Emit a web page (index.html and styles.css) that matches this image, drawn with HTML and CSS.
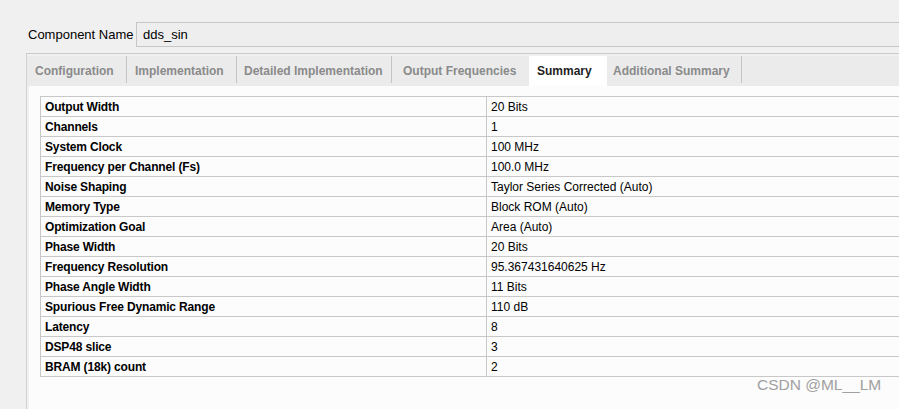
FILE: index.html
```html
<!DOCTYPE html>
<html lang="en">
<head>
<meta charset="UTF-8" />
<title>dds_sin</title>
<link rel="stylesheet" href="styles.css">
</head>
<body>
  <div class="name-row">
    <span class="name-label">Component Name</span>
    <input type="text" class="name-input" value="dds_sin" />
  </div>

  <div class="panel">
    <div class="tabs">
      <div class="tab t1">Configuration</div>
      <div class="tab t2">Implementation</div>
      <div class="tab t3">Detailed Implementation</div>
      <div class="tab t4">Output Frequencies</div>
      <div class="tab t5 active">Summary</div>
      <div class="tab t6">Additional Summary</div>
    </div>
    <div class="content">
      <table class="summary">
        <tr><td class="key">Output Width</td><td>20 Bits</td></tr>
        <tr><td class="key">Channels</td><td>1</td></tr>
        <tr><td class="key">System Clock</td><td>100 MHz</td></tr>
        <tr><td class="key">Frequency per Channel (Fs)</td><td>100.0 MHz</td></tr>
        <tr><td class="key">Noise Shaping</td><td>Taylor Series Corrected (Auto)</td></tr>
        <tr><td class="key">Memory Type</td><td>Block ROM (Auto)</td></tr>
        <tr><td class="key">Optimization Goal</td><td>Area (Auto)</td></tr>
        <tr><td class="key">Phase Width</td><td>20 Bits</td></tr>
        <tr><td class="key">Frequency Resolution</td><td>95.367431640625 Hz</td></tr>
        <tr><td class="key">Phase Angle Width</td><td>11 Bits</td></tr>
        <tr><td class="key">Spurious Free Dynamic Range</td><td>110 dB</td></tr>
        <tr><td class="key">Latency</td><td>8</td></tr>
        <tr><td class="key">DSP48 slice</td><td>3</td></tr>
        <tr><td class="key">BRAM (18k) count</td><td>2</td></tr>
      </table>
      <div class="watermark">CSDN @ML__LM</div>
    </div>
  </div>
</body>
</html>
```

FILE: styles.css
```css
html, body {
  height: 409px;
}
body {
  margin: 0;
  background-color: #f0f0f0;
  font-family: "Liberation Sans", Arial, sans-serif;
  font-size: 12px;
  color: #000;
  overflow: hidden;
}
.name-row {
  display: flex;
  align-items: center;
  padding-top: 22px;
  padding-left: 28px;
  height: 25px;
}
.name-label {
  font-size: 13px;
  width: 108px;
}
.name-input {
  flex: 1;
  min-width: 0;
  height: 25px;
  box-sizing: border-box;
  margin: 0;
  padding: 0 6px;
  border: 1px solid #c6c6c6;
  border-right: none;
  background-color: #eeeeee;
  font-family: "Liberation Sans", Arial, sans-serif;
  font-size: 13px;
  color: #000;
}
.panel {
  margin-top: 6px;
  margin-left: 26px;
  border-top: 1px solid #cacaca;
  border-left: 1px solid #d2d2d2;
  height: 355px;
  overflow: hidden;
}
.tabs {
  display: flex;
  margin-top: 2px;
  height: 30px;
  background-color: #ebebeb;
}
.tab {
  box-sizing: border-box;
  padding: 0 8px;
  line-height: 30px;
  font-weight: bold;
  color: #8a8a8a;
  position: relative;
  white-space: nowrap;
}
.tab::after {
  content: "";
  position: absolute;
  right: 0;
  top: 0;
  bottom: 3px;
  border-right: 1px solid #c4c4c4;
}
.tab.t1 { width: 100px; }
.tab.t2 { width: 110px; }
.tab.t3 { width: 155px; padding-left: 7px; }
.tab.t4 { width: 137px; padding-left: 11px; }
.tab.t5 { width: 78px; }
.tab.t6 { width: 135px; padding-left: 6px; }
.tab.t4::after,
.tab.t5::after {
  display: none;
}
.tab.active {
  background-color: #ffffff;
  color: #1e1e1e;
}
.content {
  margin-left: 2px;
  background-color: #fcfcfc;
  padding: 10px 0 0 11px;
  height: 313px;
  position: relative;
  overflow: hidden;
}
.summary {
  border-collapse: collapse;
  width: calc(100% + 4px);
  background-color: #fcfcfc;
}
.summary td {
  border: 1px solid #c8c8c8;
  height: 19px;
  padding: 0 4px;
  white-space: nowrap;
}
.summary td.key {
  width: 437px;
  font-weight: bold;
  letter-spacing: -0.15px;
}
.watermark {
  position: absolute;
  left: 728px;
  top: 290px;
  font-size: 15.5px;
  color: #a0a0a0;
}
```
